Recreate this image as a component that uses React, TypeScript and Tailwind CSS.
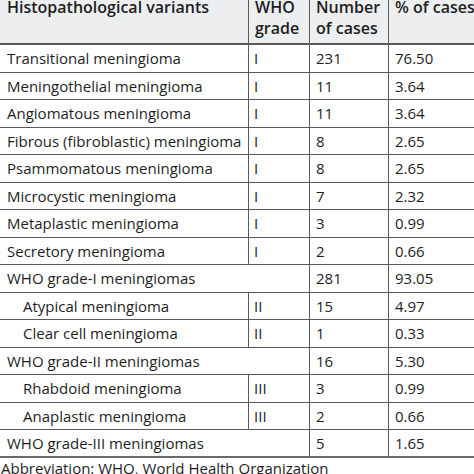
const rows: { name: string; grade?: string; n: string; pct: string; indent?: boolean; total?: boolean }[] = [
  { name: "Transitional meningioma", grade: "I", n: "231", pct: "76.50" },
  { name: "Meningothelial meningioma", grade: "I", n: "11", pct: "3.64" },
  { name: "Angiomatous meningioma", grade: "I", n: "11", pct: "3.64" },
  { name: "Fibrous (fibroblastic) meningioma", grade: "I", n: "8", pct: "2.65" },
  { name: "Psammomatous meningioma", grade: "I", n: "8", pct: "2.65" },
  { name: "Microcystic meningioma", grade: "I", n: "7", pct: "2.32" },
  { name: "Metaplastic meningioma", grade: "I", n: "3", pct: "0.99" },
  { name: "Secretory meningioma", grade: "I", n: "2", pct: "0.66" },
  { name: "WHO grade-I meningiomas", n: "281", pct: "93.05", total: true },
  { name: "Atypical meningioma", grade: "II", n: "15", pct: "4.97", indent: true },
  { name: "Clear cell meningioma", grade: "II", n: "1", pct: "0.33", indent: true },
  { name: "WHO grade-II meningiomas", n: "16", pct: "5.30", total: true },
  { name: "Rhabdoid meningioma", grade: "III", n: "3", pct: "0.99", indent: true },
  { name: "Anaplastic meningioma", grade: "III", n: "2", pct: "0.66", indent: true },
  { name: "WHO grade-III meningiomas", n: "5", pct: "1.65", total: true },
];

export default function App() {
  return (
    <div className="h-[474px] w-[474px] overflow-hidden bg-white text-[15px] text-[#1e1e1e] [font-family:'Open_Sans',sans-serif]">
      {/* Header */}
      <div className="grid h-[45px] grid-cols-[248px_61px_79px_1fr] border-b-2 border-[#5a5a5a] bg-[#eceef0] leading-[21px] font-semibold">
        <div className="-mt-[3px] whitespace-nowrap pl-[7px] text-[16px]">Histopathological variants</div>
        <div className="-mt-[3px] border-l border-[#5a5a5a] pl-[6px] text-[16px]">
          WHO
          <br />
          grade
        </div>
        <div className="-mt-[3px] border-l border-[#5a5a5a] pl-[6px] text-[16px]">
          Number
          <br />
          of cases
        </div>
        <div className="-mt-[3px] whitespace-nowrap border-l border-[#5a5a5a] pl-[6px] text-[16px]">% of cases</div>
      </div>

      {/* Body */}
      {rows.map((r, i) => (
        <div
          key={i}
          className={`grid h-[27.5px] grid-cols-[248px_61px_79px_1fr] items-center ${
            i === rows.length - 1 ? "border-b-2 border-[#6a6a6a]" : "border-b border-[#5a5a5a]"
          }`}
        >
          {r.total ? (
            <div className="col-span-2 whitespace-nowrap pl-[7px]">{r.name}</div>
          ) : (
            <>
              <div className={`whitespace-nowrap ${r.indent ? "pl-[23px]" : "pl-[7px]"}`}>{r.name}</div>
              <div className="flex h-full items-center border-l border-[#5a5a5a] pl-[5px]">{r.grade}</div>
            </>
          )}
          <div className="flex h-full items-center border-l border-[#5a5a5a] pl-[6px]">{r.n}</div>
          <div className="flex h-full items-center border-l border-[#5a5a5a] pl-[6px]">{r.pct}</div>
        </div>
      ))}

      <div className="mt-[1px] whitespace-nowrap pl-[1px] leading-[18px]">Abbreviation: WHO, World Health Organization</div>
    </div>
  );
}
